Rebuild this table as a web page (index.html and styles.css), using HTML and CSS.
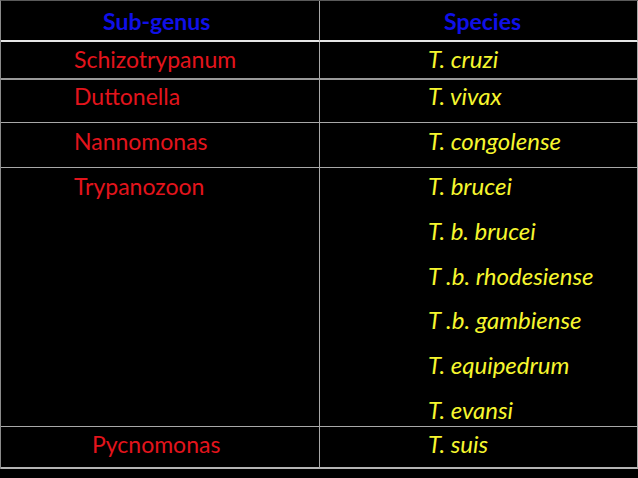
FILE: index.html
```html
<!DOCTYPE html>
<html>
<head>
<meta charset="utf-8">
<link rel="stylesheet" href="styles.css">
</head>
<body>
<table class="grid">
  <tr class="head">
    <th class="c-left"><span class="h-sub">Sub-genus</span></th>
    <th class="c-right"><span class="h-sp">Species</span></th>
  </tr>
  <tr class="r1">
    <td class="c-left genus">Schizotrypanum</td>
    <td class="c-right species">T. cruzi</td>
  </tr>
  <tr class="r2">
    <td class="c-left genus">Duttonella</td>
    <td class="c-right species">T. vivax</td>
  </tr>
  <tr class="r3">
    <td class="c-left genus">Nannomonas</td>
    <td class="c-right species">T. congolense</td>
  </tr>
  <tr class="r4">
    <td class="c-left genus">Trypanozoon</td>
    <td class="c-right species">
      <div class="list">
        <div>T. brucei</div>
        <div>T. b. brucei</div>
        <div>T .b. rhodesiense</div>
        <div>T .b. gambiense</div>
        <div>T. equipedrum</div>
        <div>T. evansi</div>
      </div>
    </td>
  </tr>
  <tr class="r5">
    <td class="c-left genus pyc">Pycnomonas</td>
    <td class="c-right species">T. suis</td>
  </tr>
</table>
</body>
</html>
```
FILE: styles.css
```css
html, body {
  margin: 0;
  padding: 0;
  background: #000;
}
body {
  width: 638px;
  height: 478px;
  overflow: hidden;
  font-family: Lato, "Open Sans", sans-serif;
  font-size: 23px;
}
.grid {
  border-collapse: separate;
  border-spacing: 0;
  width: 638px;
  table-layout: fixed;
  border-top: 1px solid #5a5a5a;
  border-left: 1px solid #8a8a8a;
}
.grid th, .grid td {
  padding: 0;
  vertical-align: top;
  text-align: left;
  border-right: 1px solid #a8a8a8;
  border-bottom: 1px solid #a8a8a8;
  line-height: 30px;
  box-sizing: content-box;
}
.c-left { width: 318px; }
.c-right { width: 317px; }

.head th {
  height: 39px;
  border-bottom: 2px solid #e6e6e6;
  color: #1010e8;
  font-weight: bold;
  padding-top: 0;
}
.h-sub { display: block; padding: 5px 0 0 102px; }
.h-sp { display: block; padding: 5px 0 0 124px; }

.genus {
  color: #e3141c;
  padding-left: 73px !important;
}
.pyc { padding-left: 91px !important; }
.species {
  color: #f6f62e;
  font-style: italic;
  font-size: 24px;
  padding-left: 108px !important;
}
.r1 td { height: 34px; padding-top: 2px !important; border-bottom-width: 2px; border-bottom-color: #9a9a9a; }
.r2 td { height: 41px; padding-top: 1px !important; }
.r3 td { height: 41px; padding-top: 3px !important; }
.r4 td { height: 255px; padding-top: 3px !important; }
.r5 td { height: 38px; padding-top: 2px !important; border-bottom: 2px solid #b4b4b4; }

.list {
  display: flex;
  flex-direction: column;
  gap: 14.8px;
}
```
